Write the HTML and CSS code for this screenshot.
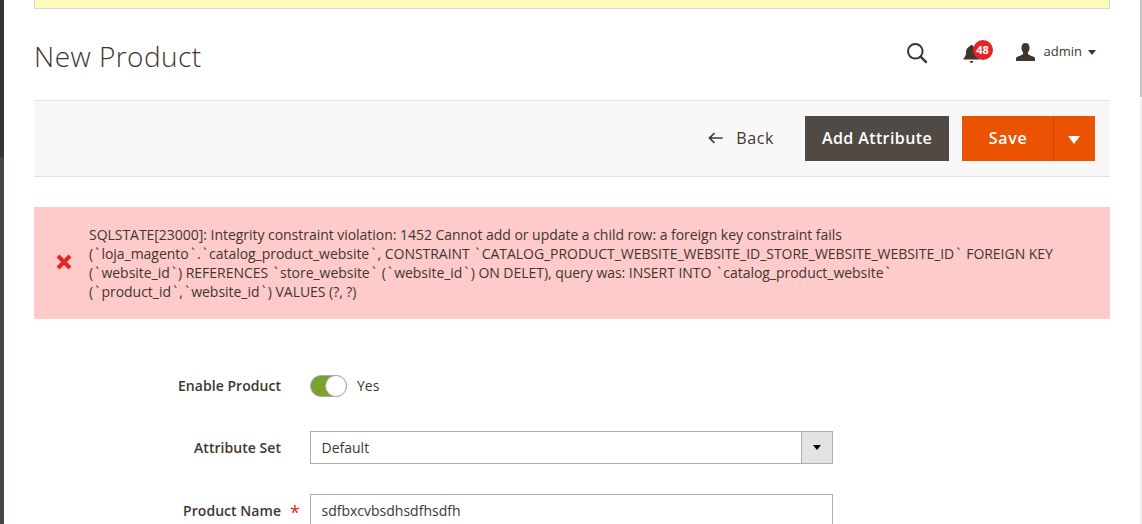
FILE: index.html
```html
<!DOCTYPE html>
<html lang="en">
<head>
<meta charset="utf-8">
<title>New Product</title>
<link rel="stylesheet" href="styles.css">
</head>
<body>
<div class="page">
  <aside class="rail"><div class="rail-top"></div><div class="rail-bottom"></div></aside>
  <main class="content">
    <div class="notice"></div>
    <header class="head">
      <h1 class="title">New Product</h1>
      <div class="actions">
        <svg class="search" width="22" height="22" viewBox="0 0 22 22"><circle cx="9.3" cy="9.3" r="7.3" fill="none" stroke="#373330" stroke-width="2"/><path d="M14.6 14.6l6 6" stroke="#373330" stroke-width="2.4" fill="none"/></svg>
        <div class="bell">
          <svg width="17" height="18" viewBox="0 0 17 18"><path fill="#41362f" d="M8.5 0c1 0 1.6.7 1.6 1.5 2.7.8 3.9 3 3.9 5.700 0 3 .7 4.500 2.500 6.300v1H.5v-1C2.300 11.700 3 10.200 3 7.200c0-2.700 1.200-4.900 3.900-5.700C6.900.7 7.500 0 8.500 0zM6.800 16h3.400c0 1-.8 2-1.700 2s-1.700-1-1.700-2z"/></svg>
          <span class="badge">48</span>
        </div>
        <div class="user">
          <svg width="19" height="18" viewBox="0 0 20 19"><path fill="#41362f" d="M10 0c2.900 0 4.300 2.200 4.300 5 0 2-.7 3.700-1.700 4.800v1.700c.6.800 2.200 1.500 4 2.200 1.900.7 3.400 1.300 3.400 2.300V19H0v-3c0-1 1.500-1.600 3.400-2.300 1.800-.7 3.400-1.400 4-2.200V9.800C6.400 8.700 5.700 7 5.700 5 5.700 2.200 7.100 0 10 0z"/></svg>
          <span class="user-name">admin</span>
          <span class="caret"></span>
        </div>
      </div>
    </header>
    <section class="toolbar">
      <a class="back"><svg width="15" height="12" viewBox="0 0 15 12"><path d="M14.500 6H2M6.500 1L1.500 6l5 5" fill="none" stroke="#41362f" stroke-width="1.700"/></svg><span>Back</span></a>
      <button class="btn btn-dark"><span class="btn-label">Add Attribute</span></button>
      <div class="split">
        <button class="btn btn-save"><span class="btn-label">Save</span></button>
        <button class="btn btn-drop"><span class="drop-arrow"></span></button>
      </div>
    </section>
    <section class="message">
      <svg class="x" width="16" height="16" viewBox="0 0 16 16"><path d="M2 2l12 12M14 2L2 14" stroke="#e22626" stroke-width="4" fill="none"/></svg>
      <p class="message-text">SQLSTATE[23000]: Integrity constraint violation: 1452 Cannot add or update a child row: a foreign key constraint fails<br>(<span class="tick">`</span>loja_magento<span class="tick">`</span>.<span class="tick">`</span>catalog_product_website<span class="tick">`</span>, CONSTRAINT <span class="tick">`</span>CATALOG_PRODUCT_WEBSITE_WEBSITE_ID_STORE_WEBSITE_WEBSITE_ID<span class="tick">`</span> FOREIGN KEY<br>(<span class="tick">`</span>website_id<span class="tick">`</span>) REFERENCES <span class="tick">`</span>store_website<span class="tick">`</span> (<span class="tick">`</span>website_id<span class="tick">`</span>) ON DELET), query was: INSERT INTO <span class="tick">`</span>catalog_product_website<span class="tick">`</span><br>(<span class="tick">`</span>product_id<span class="tick">`</span>,<span class="tick">`</span>website_id<span class="tick">`</span>) VALUES (?, ?)</p>
    </section>
    <form class="form">
      <div class="row row-toggle">
        <label class="label">Enable Product</label>
        <div class="control toggle-wrap"><span class="toggle"><span class="knob"></span></span><span class="yes">Yes</span></div>
      </div>
      <div class="row row-set">
        <label class="label">Attribute Set</label>
        <div class="control"><div class="select"><span class="select-value">Default</span><span class="select-btn"><span class="select-arrow"></span></span></div></div>
      </div>
      <div class="row row-name">
        <label class="label">Product Name<span class="req">*</span></label>
        <div class="control"><div class="input">sdfbxcvbsdhsdfhsdfh</div></div>
      </div>
    </form>
  </main>
  <div class="scrollbar"><div class="thumb"></div></div>
</div>
</body>
</html>
```
FILE: styles.css
```css
* { box-sizing: border-box; }
html, body { margin: 0; height: 100%; overflow: hidden; background: #fff; }
body { font-family: "Open Sans", sans-serif; font-size: 14px; color: #41362f; }
.page { display: flex; height: 524px; overflow: hidden; }
.rail { width: 4px; flex: none; display: flex; flex-direction: column; }
.rail-top { height: 157px; background: #373330; }
.rail-bottom { flex: 1; background: #4a4542; }
.content { width: 1136px; flex: none; padding: 0 30px; }
.scrollbar { width: 2px; flex: none; background: #f1f1f1; }
.thumb { height: 97px; background: #c1c1c1; }
.notice { height: 9px; background: #fffbbb; border: 1px solid #d6d6d6; border-top: 0; }
.head { height: 91px; display: flex; align-items: center; justify-content: space-between; padding-bottom: 5px; }
.title { margin: 0; font-size: 28px; font-weight: 300; line-height: 36px; letter-spacing: .45px; color: #41362f; padding-top: 7px; }
.actions { display: flex; align-items: center; padding-right: 14px; }
.search { margin-right: 35px; margin-top: 2px; }
.bell { position: relative; width: 17px; height: 18px; margin-right: 36px; margin-top: 3px; }
.bell svg { display: block; }
.badge { position: absolute; left: 10px; top: -5px; width: 20px; height: 20px; border-radius: 50%; background: #e22626; color: #fff; font-size: 11px; font-weight: 700; line-height: 20px; text-align: center; }
.user { display: flex; align-items: center; }
.user svg { display: block; margin-right: 9px; }
.user-name { font-size: 13px; line-height: 18px; margin-bottom: 2px; }
.caret { margin-left: 6px; margin-top: 1px; width: 0; height: 0; border: 4px solid transparent; border-top: 5px solid #41362f; border-bottom: 0; }
.toolbar { height: 77px; background: #f8f8f8; border-top: 1px solid #e3e3e3; border-bottom: 1px solid #e3e3e3; display: flex; align-items: center; justify-content: flex-end; padding-right: 15px; }
.back { display: flex; align-items: center; gap: 13px; font-size: 16px; letter-spacing: .6px; margin-right: 31px; padding-bottom: 2px; }
.btn { border: 0; height: 45px; padding: 0; font-family: inherit; font-size: 16px; font-weight: 600; color: #fff; }
.btn-label { display: block; padding-bottom: 2px; letter-spacing: .4px; }
.btn-dark { width: 144px; background: #514943; margin-right: 13px; }
.split { display: flex; }
.btn-save { width: 92px; background: #eb5202; border-right: 1px solid #c9470a; }
.btn-save .btn-label { letter-spacing: .7px; padding-left: 1px; }
.btn-drop { width: 41px; background: #eb5202; display: flex; align-items: center; justify-content: center; }
.drop-arrow { width: 0; height: 0; margin-top: 3px; margin-right: 1px; border: 6px solid transparent; border-top: 8px solid #fff; border-bottom: 0; }
.message { margin-top: 30px; height: 112px; background: #ffcaca; display: flex; align-items: center; padding-left: 22px; }
.x { flex: none; margin-right: 17px; margin-top: -3px; }
.message-text { margin: 0; font-size: 14px; line-height: 19px; letter-spacing: -.035px; color: #41362f; }
.tick { padding: 0 2.25px; }
.form { display: block; }
.row { display: flex; align-items: center; }
.label { width: 247px; text-align: right; font-weight: 600; font-size: 14px; letter-spacing: .04px; position: relative; }
.control { margin-left: 29px; }
.row-toggle { margin-top: 55px; height: 23px; }
.row-set { margin-top: 34px; height: 33px; }
.row-name { margin-top: 30px; height: 33px; }
.toggle-wrap { display: flex; align-items: center; }
.toggle { width: 37px; height: 22px; border-radius: 11px; background: #79a22e; border: 1px solid #adadad; display: block; position: relative; }
.knob { position: absolute; right: -1px; top: -1px; width: 22px; height: 22px; border-radius: 50%; background: #fff; border: 1px solid #adadad; }
.yes { margin-left: 10px; font-size: 14px; }
.select { width: 523px; height: 33px; border: 1px solid #adadad; display: flex; justify-content: space-between; align-items: stretch; background: #fff; }
.select-value { padding-left: 10.5px; line-height: 31px; font-size: 14px; }
.select-btn { width: 31px; background: #e3e3e3; border-left: 1px solid #adadad; display: flex; align-items: center; justify-content: center; }
.select-arrow { width: 0; height: 0; border: 4px solid transparent; border-top: 5px solid #000; border-bottom: 0; }
.input { width: 523px; height: 33px; border: 1px solid #adadad; padding-left: 10.5px; line-height: 31px; font-size: 14px; background: #fff; }
.req { position: absolute; right: -19px; top: -1px; color: #e22626; font-size: 18px; font-weight: 400; line-height: 24px; }
```
